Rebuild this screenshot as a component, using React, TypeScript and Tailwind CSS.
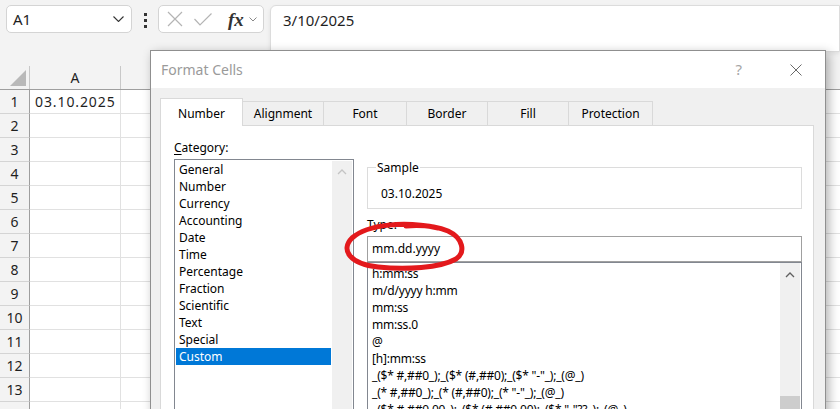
import { useState } from "react";

const categories = [
  "General",
  "Number",
  "Currency",
  "Accounting",
  "Date",
  "Time",
  "Percentage",
  "Fraction",
  "Scientific",
  "Text",
  "Special",
  "Custom",
];

const types = [
  "h:mm:ss",
  "m/d/yyyy h:mm",
  "mm:ss",
  "mm:ss.0",
  "@",
  "[h]:mm:ss",
  '_($* #,##0_);_($* (#,##0);_($* "-"_);_(@_)',
  '_(* #,##0_);_(* (#,##0);_(* "-"_);_(@_)',
  '_($* #,##0.00_);_($* (#,##0.00);_($* "-"??_);_(@_)',
];

const tabs = [
  { label: "Number", w: "w-[83px]" },
  { label: "Alignment", w: "w-[81px]" },
  { label: "Font", w: "w-[83px]" },
  { label: "Border", w: "w-[81px]" },
  { label: "Fill", w: "w-[81px]" },
  { label: "Protection", w: "w-[84px]" },
];

function ChevronUp({ color }: { color: string }) {
  return (
    <svg width="10" height="6" viewBox="0 0 10 6" fill="none" stroke={color} strokeWidth="1.3">
      <polyline points="1,5 5,1 9,5" />
    </svg>
  );
}

export default function App() {
  const [category, setCategory] = useState("Custom");
  const rows = Array.from({ length: 14 }, (_, i) => i + 1);

  return (
    <div className="relative w-[840px] h-[409px] overflow-hidden bg-[#f3f3f3] font-['Noto_Sans',sans-serif] text-[#1f1f1f]">
      {/* barre de formule */}
      <div className="flex items-start h-[66px] pt-[5px] pl-[6px]">
        <div className="flex items-center justify-between w-[126px] h-[28px] rounded-[5px] border border-[#d4d4d4] bg-white pl-[6px] pr-[7px]">
          <span className="text-[15px] leading-none">A1</span>
          <svg width="11" height="6" viewBox="0 0 11 6" fill="none" stroke="#333" strokeWidth="1.1">
            <polyline points="0.5,0.5 5.5,5.5 10.5,0.5" />
          </svg>
        </div>
        <div className="w-[26px] flex flex-col items-center gap-[3px] pt-[8px]">
          <span className="w-[3px] h-[3px] bg-[#333]" />
          <span className="w-[3px] h-[3px] bg-[#333]" />
          <span className="w-[3px] h-[3px] bg-[#333]" />
        </div>
        <div className="flex items-center w-[106px] h-[28px] rounded-[5px] border border-[#d4d4d4] bg-white pl-[8px]">
          <svg width="16" height="16" viewBox="0 0 16 16" fill="none" stroke="#b4b4b4" strokeWidth="1.2">
            <path d="M1 1L15 15M15 1L1 15" />
          </svg>
          <svg className="ml-[11px]" width="18" height="13" viewBox="0 0 18 13" fill="none" stroke="#b4b4b4" strokeWidth="1.2">
            <polyline points="0.5,6 6,12 17.5,0.5" />
          </svg>
          <span className="ml-[16px] font-['Liberation_Serif',serif] italic font-bold text-[19px] leading-none text-[#333]">
            fx
          </span>
          <svg className="ml-[5px]" width="8" height="5" viewBox="0 0 8 5" fill="none" stroke="#888" strokeWidth="1">
            <polyline points="0.5,0.5 4,4 7.5,0.5" />
          </svg>
        </div>
        <div className="ml-[6px] flex-1 h-[47px] rounded-tl-[6px] border border-[#dcdcdc] bg-white pl-[12px] pt-px shadow-[0_2px_4px_rgba(0,0,0,0.08)]">
          <span className="text-[15px] leading-[26px]">3/10/2025</span>
        </div>
      </div>

      {/* feuille */}
      <div className="flex flex-col">
        <div className="flex h-[24px] border-b border-[#9e9e9e]">
          <div className="w-[30px] border-r border-[#c8c8c8] flex items-end justify-end pr-[3px] pb-[3px]">
            <svg width="16" height="16" viewBox="0 0 16 16">
              <polygon points="16,0 16,16 0,16" fill="#b9b9b9" />
            </svg>
          </div>
          <div className="w-[91px] border-r border-[#c8c8c8] flex items-center justify-center text-[14px]">A</div>
          <div className="w-[91px] border-r border-[#c8c8c8]" />
          <div className="flex-1" />
        </div>
        {rows.map((r) => (
          <div key={r} className="flex h-[24px] border-b border-[#e1e1e1] bg-white">
            <div className="w-[30px] bg-[#f3f3f3] border-r border-[#9e9e9e] border-b border-b-[#d4d4d4] -mb-px flex items-center justify-center text-[14px]">
              {r < 14 ? r : ""}
            </div>
            <div className="w-[91px] border-r border-[#e1e1e1] flex items-center pl-[5px] text-[14px] tracking-[0.9px]">
              {r === 1 ? "03.10.2025" : ""}
            </div>
            <div className="w-[91px] border-r border-[#e1e1e1]" />
            <div className="flex-1" />
          </div>
        ))}
      </div>

      {/* boîte de dialogue */}
      <div className="absolute left-[150px] top-[50px] w-[676px] h-[380px] border border-[#8f8f8f] bg-[#f0f0f0] shadow-[3px_3px_10px_rgba(0,0,0,0.3)] text-[12px] text-[#000]">
        <div className="flex items-center h-[37px] bg-white pl-[10px]">
          <span className="text-[14px] text-[#9a9a9a]">Format Cells</span>
          <span className="ml-auto text-[15px] text-[#a6a6a6]">?</span>
          <svg className="ml-[48px] mr-[23px]" width="12" height="12" viewBox="0 0 12 12" fill="none" stroke="#6a6a6a" strokeWidth="1">
            <path d="M0.5 0.5L11.5 11.5M11.5 0.5L0.5 11.5" />
          </svg>
        </div>

        <div className="pl-[9px] pt-[9px]">
          <div className="flex items-end h-[28px]">
            {tabs.map((t, i) =>
              i === 0 ? (
                <div
                  key={t.label}
                  className={`${t.w} h-[28px] -mb-px relative z-10 bg-white border border-b-0 border-[#d9d9d9] flex items-center justify-center pt-[3px]`}
                >
                  {t.label}
                </div>
              ) : (
                <div
                  key={t.label}
                  className={`${t.w} h-[24px] border-t border-r border-[#d9d9d9] flex items-center justify-center`}
                >
                  {t.label}
                </div>
              )
            )}
          </div>

          <div className="w-[654px] h-[300px] bg-white border border-[#d9d9d9] flex pl-[13px]">
            {/* catégories */}
            <div className="w-[180px] shrink-0 flex flex-col pt-[13px]">
              <div className="shrink-0 h-[17px] leading-[17px]">
                <span className="underline underline-offset-2">C</span>ategory:
              </div>
              <div className="shrink-0 mt-[3px] h-[260px] border border-[#828790] flex p-px">
                <div className="w-[155px] flex flex-col">
                  {categories.map((c) => (
                    <div
                      key={c}
                      onClick={() => setCategory(c)}
                      className={
                        c === category
                          ? "h-[17px] leading-[17px] pl-[3px] bg-[#0078d7] text-white"
                          : "h-[17px] leading-[17px] pl-[3px]"
                      }
                    >
                      {c}
                    </div>
                  ))}
                </div>
                <div className="ml-px flex-1 bg-[#f0f0f0] flex justify-center pt-[8px]">
                  <div className="h-[6px] flex">
                    <ChevronUp color="#c4c4c4" />
                  </div>
                </div>
              </div>
            </div>

            {/* exemple et type */}
            <div className="ml-[13px] w-[435px] shrink-0 flex flex-col">
              <div className="relative shrink-0 mt-[41px] h-[42px] border border-[#dcdcdc] pl-[13px] pt-[17px]">
                <span className="absolute -top-[9px] left-[8px] bg-white px-px leading-[17px]">Sample</span>
                <div className="leading-[17px]">03.10.2025</div>
              </div>
              <div className="shrink-0 mt-[7px] h-[17px] leading-[17px]">Type:</div>
              <div className="shrink-0 mt-[3px] h-[26px] border border-[#a0a0a0] flex items-center pl-[4px]">mm.dd.yyyy</div>
              <div className="shrink-0 h-[160px] border border-[#828790] flex">
                <div className="flex-1 mt-[6px] overflow-hidden">
                  <div className="-mt-[4px] pl-[4px]">
                    {types.map((t) => (
                      <div key={t} className="h-[17px] leading-[17px] whitespace-pre tracking-[-0.2px]">
                        {t}
                      </div>
                    ))}
                  </div>
                </div>
                <div className="w-[20px] mr-px bg-[#f0f0f0] flex flex-col items-center pt-[9px]">
                  <div className="h-[6px] flex">
                    <ChevronUp color="#606060" />
                  </div>
                  <div className="mt-[118px] w-full h-[40px] bg-[#cdcdcd]" />
                </div>
              </div>
            </div>
          </div>
        </div>
      </div>

      {/* cercle rouge dessiné à la main */}
      <svg className="absolute left-0 top-0 pointer-events-none" width="840" height="409" viewBox="0 0 840 409" fill="none">
        <path
          d="M438 228 C405 221 368 224 352 238 C340 250 350 264 378 267 C405 270 440 268 456 259 C466 252 463 238 448 231 C436 226 420 225 406 226"
          stroke="#e3191c"
          strokeWidth="5"
          strokeLinecap="round"
        />
      </svg>
    </div>
  );
}
